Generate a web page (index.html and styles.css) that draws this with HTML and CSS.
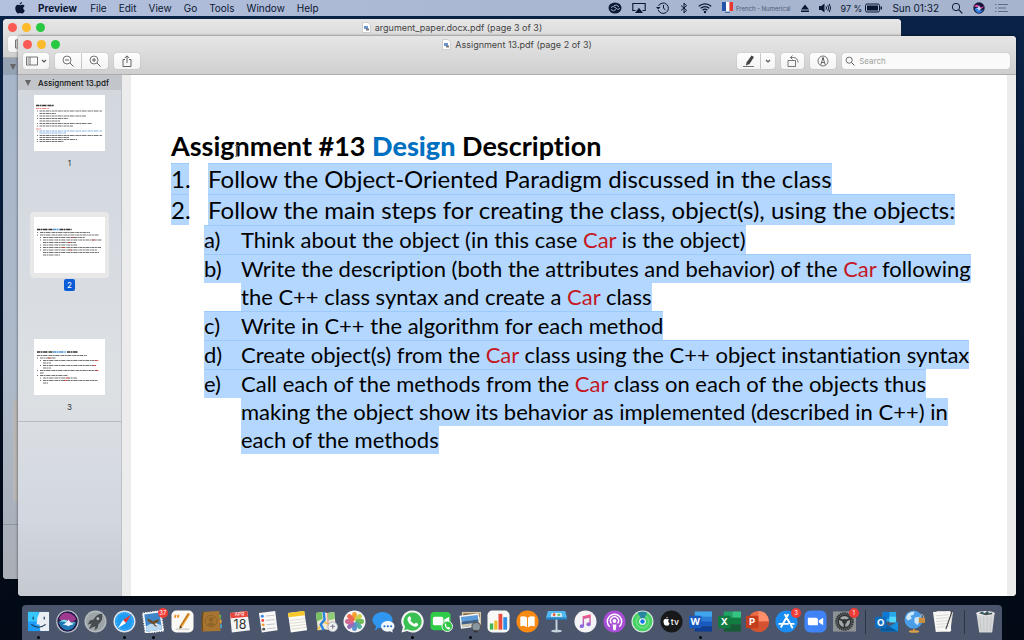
FILE: index.html
```html
<!DOCTYPE html>
<html lang="en">
<head>
    <meta charset="UTF-8">
    <meta name="viewport" content="width=device-width, initial-scale=1.0">
    <title>Assignment 13.pdf</title>
    <link rel="stylesheet" href="styles.css">
</head>
<body>
    <!-- shared icons -->
    <svg class="defs" aria-hidden="true">
        <symbol id="i-search" viewBox="0 0 12 12"><circle cx="5" cy="5" r="3.7" fill="none" stroke="currentColor"/><path d="M7.7 7.7 11.3 11.3" stroke="currentColor" stroke-width="1.2"/></symbol>
        <symbol id="i-doc" viewBox="0 0 9 11"><path d="M.5.5H6L8.500 3V10.500H.5Z" fill="#fff" stroke="#bbb" stroke-width=".6"/><path d="M2 4h4v3H2z" fill="#6b94cf"/><path d="M4 6.500h3v2H4z" fill="#777"/></symbol>
        <symbol id="i-chevron" viewBox="0 0 6 4"><path d="M1 1 3 3 5 1" fill="none" stroke="currentColor" stroke-width="1.1"/></symbol>
        <symbol id="i-panel" viewBox="0 0 12 9"><path d="M.5.5h11v8H.5zM4 .5v8M1.500 2.500h1.500M1.500 4.500h1.500M1.500 6.500h1.500" fill="none" stroke="currentColor" stroke-width=".8"/></symbol>
    </svg>

    <!-- BEGIN::menubar -->
    <header class="menubar">
        <nav class="menus">
            <button class="apple" aria-label="Apple menu"><svg viewBox="0 0 10 12"><path d="M6.900 0c.1 1.300-1 2.600-2.200 2.600C4.500 1.400 5.700.2 6.900 0ZM8.300 6.300c0-1.200.6-1.900 1.300-2.400C9 3.100 8 2.800 7.300 2.800c-1 0-1.500.5-2.200.5S3.800 2.800 3 2.800C1.400 2.900.3 4.200.3 6.300.3 9 2 11.600 3.300 11.600c.7 0 1.100-.5 1.900-.5s1.100.5 1.900.5c1.100 0 2.200-1.700 2.700-3.100C8.800 8.100 8.300 7.300 8.300 6.300Z"/></svg></button>
            <button class="app-name">Preview</button>
            <button>File</button>
            <button>Edit</button>
            <button>View</button>
            <button>Go</button>
            <button>Tools</button>
            <button>Window</button>
            <button>Help</button>
        </nav>
        <div class="status">
            <svg class="w14" viewBox="0 0 14 12"><ellipse cx="7" cy="6" rx="6.500" ry="5.500"/><path d="M3 5.500Q5 3 8 6t3.500 0M2.800 7.500Q5.500 10 8 7.500M6 3.500Q9 2 11 5" fill="none" stroke="#aebcd6" stroke-width=".9"/></svg>
            <svg class="w14" viewBox="0 0 14 12"><path d="M3.500 8.500H.8v-7h12.400v7h-2.700" fill="none" stroke="currentColor" stroke-width="1.100"/><path d="M7 5.800 11 11H3z"/></svg>
            <svg class="w14" viewBox="0 0 14 12"><path d="M2.500 4A5.200 5.200 0 1 1 2.300 8M7.500 3v3.300l2 1.500" fill="none" stroke="currentColor"/><path d="M0 5h4.500L2.200 7.500z"/></svg>
            <svg class="w8" viewBox="0 0 8 12"><path d="M1 3.500 6.500 8.300 4 11V1L6.500 3.700 1 8.500" fill="none" stroke="currentColor"/></svg>
            <svg class="w14" viewBox="0 0 14 12"><path d="M.8 4.300a9 9 0 0 1 12.400 0M2.700 6.300a6.200 6.200 0 0 1 8.600 0M4.600 8.300a3.500 3.500 0 0 1 4.800 0" fill="none" stroke="currentColor" stroke-width="1.200"/><circle cx="7" cy="10" r="1.200"/></svg>
            <span class="input-source">
                <svg viewBox="0 0 11 12"><path fill="#2454a8" d="M0 0h4v9H0z"/><path fill="#fff" d="M4 0h3.500v9H4z"/><path fill="#e8372f" d="M7.500 0H11v9H7.500z"/><path d="M3 10.500h5" stroke="#4a6ba8"/></svg>
                French - Numerical
            </span>
            <svg class="w8" viewBox="0 0 8 12"><path d="M4 2.500 8 7.500H0zM0 8.500h8V10H0z"/></svg>
            <svg class="w12" viewBox="0 0 12 12"><path d="M0 4h2.300L5.500 1.500v9L2.300 8H0z"/><path d="M7 4.300q1.200 1.700 0 3.400M8.700 3q2.200 3 0 6M10.300 1.800q2.600 4.200 0 8.400" fill="none" stroke="currentColor"/></svg>
            <span class="battery">97 % <svg viewBox="0 0 17 12"><rect x=".5" y="2" width="14" height="8" rx="1.500" fill="none" stroke="currentColor"/><path d="M2 3.500h11v5H2zM15.500 4.500H17v3h-1.500z"/></svg></span>
            <time>Sun 01:32</time>
            <svg class="w12"><use href="#i-search"/></svg>
            <svg class="w12" viewBox="0 0 12 12"><circle cx="6" cy="6" r="5.700" fill="#16143a"/><path d="M1 5q2-4 5-1t5-1q-1 5-5 3T1 5Z" fill="#e24b9e"/><path d="M1.500 7q3-3 4.500 0t5 0q-2 4-5 4T1.500 7Z" fill="#2c7ee0"/><path d="m6 3 1 3 2 1-2 .5L6 9l-1-2-2-.5L5 6z" fill="#c6ddff"/></svg>
            <svg class="w14 faded" viewBox="0 0 14 12"><path d="M0 2.500h1.500M3 2.500h10M0 6h1.500M3 6h8M0 9.500h1.500M3 9.500h10" stroke="currentColor" stroke-width="1.200"/></svg>
        </div>
    </header>
    <!-- END::menubar -->

    <!-- BEGIN::desktop -->
    <main class="desktop">
        <!-- BEGIN::back window -->
        <section class="window window-back">
            <div class="chrome">
                <div class="titlebar">
                    <div class="lights"><i class="red"></i><i class="yellow"></i><i class="green"></i></div>
                    <h2><svg><use href="#i-doc"/></svg>argument_paper.docx.pdf (page 3 of 3)</h2>
                </div>
                <div class="toolbar">
                    <button class="tool" aria-label="Sidebar"><svg class="w12"><use href="#i-panel"/></svg></button>
                </div>
            </div>
            <div class="back-sidebar">
                <div class="back-heading"><i class="triangle"></i></div>
                <div class="back-pages"><div class="back-selected"></div></div>
                <div class="back-rest"></div>
            </div>
        </section>
        <!-- END::back window -->

        <!-- BEGIN::front window -->
        <section class="window window-front">
            <div class="chrome">
                <div class="titlebar">
                    <div class="lights"><i class="red"></i><i class="yellow"></i><i class="green"></i></div>
                    <h2><svg><use href="#i-doc"/></svg>Assignment 13.pdf (page 2 of 3)</h2>
                </div>
                <div class="toolbar">
                    <button class="tool" aria-label="Sidebar view"><svg class="w12"><use href="#i-panel"/></svg><svg class="w6"><use href="#i-chevron"/></svg></button>
                    <div class="tool-group">
                        <button class="tool" aria-label="Zoom out"><svg class="w12" viewBox="0 0 12 12"><circle cx="5" cy="5" r="4" fill="none" stroke="currentColor" stroke-width=".8"/><path d="M3 5h4M8 8l3.500 3.500" stroke="currentColor" stroke-width=".9"/></svg></button>
                        <button class="tool" aria-label="Zoom in"><svg class="w12" viewBox="0 0 12 12"><circle cx="5" cy="5" r="4" fill="none" stroke="currentColor" stroke-width=".8"/><path d="M3 5h4M5 3v4M8 8l3.500 3.500" stroke="currentColor" stroke-width=".9"/></svg></button>
                    </div>
                    <button class="tool" aria-label="Share"><svg class="w12" viewBox="0 0 12 12"><path d="M4 4.500H2v7h8v-7H8M6 8V1M3.800 3 6 .8 8.200 3" fill="none" stroke="currentColor" stroke-width=".9"/></svg></button>
                    <div class="spacer"></div>
                    <div class="tool-group">
                        <button class="tool narrow" aria-label="Highlight"><svg class="w12" viewBox="0 0 12 12"><path d="M8.500.5 11 2 6.500 9 3 10.500 3.500 7.500z" fill="#444"/><path d="M0 11.500h11" stroke="currentColor" stroke-width=".8"/></svg></button>
                        <button class="tool mini" aria-label="Highlight colours"><svg class="w6"><use href="#i-chevron"/></svg></button>
                    </div>
                    <button class="tool narrow" aria-label="Rotate"><svg class="w12" viewBox="0 0 12 12"><path d="M1 5.500h7.500v6H1zM3.500 2.500h3q4 0 4.500 5M5.500.5l-2 2 2 2" fill="none" stroke="currentColor" stroke-width=".8"/></svg></button>
                    <button class="tool" aria-label="Markup"><svg class="w12" viewBox="0 0 12 12"><circle cx="6" cy="6" r="5" fill="none" stroke="currentColor" stroke-width=".8"/><path d="M3.800 9.800 6 2.500l2.200 7.300M4.700 7.500h2.600M6 2.500V5" fill="none" stroke="currentColor" stroke-width=".9"/></svg></button>
                    <label class="search"><svg class="w12"><use href="#i-search"/></svg><input type="text" placeholder="Search" aria-label="Search"></label>
                </div>
            </div>

            <div class="content">
                <!-- BEGIN::sidebar -->
                <aside class="sidebar">
                    <h3><i class="triangle"></i>Assignment 13.pdf</h3>
                    <div class="pages">
                        <a class="page" href="#page1">
                            <svg viewBox="0 0 71 56">
                                <g class="tiny">
                                    <path class="strong" d="M2 10.500h18"/>
                                    <path class="r" d="M2 13.500h13M2 34h5"/>
                                    <path d="M3 16h1M5.500 16H68M5.500 18.500H22M3 21h1M5.500 21H52M3 23.500h1M5.500 23.500H34M5.500 26H26M3 28.500h1M5.500 28.500H58M3 31h1M5.500 31H39M3 40.500h1M5.500 40.500H68M5.500 42.500H35M3 44.500h1M5.500 44.500H43M3 46.500h1M5.500 46.500H30"/>
                                    <path class="b" d="M3 36h1M5.500 36H68M5.500 38H32"/>
                                </g>
                            </svg>
                            <span>1</span>
                        </a>
                        <a class="page current" href="#page2" aria-current="page">
                            <svg viewBox="0 0 71 56">
                                <g class="tiny">
                                    <path class="strong" d="M3 12.500h16M26 12.500h12"/>
                                    <path class="b strong" d="M19 12.500h7"/>
                                    <path d="M3 15.500h1M6 15.500H56M3 18h1M6 18H65M6 20.500h1M9 20.500H51M6 23h1M9 23H68M9 25.500H42M6 28h1M9 28H43M6 30.500h1M9 30.500H67M6 33h1M9 33H63M9 35.500H65M9 38H26"/>
                                    <path class="r" d="M37 20.500h3M58 23h3M34 25.500h3M28 30.500h3M35 33h3"/>
                                </g>
                            </svg>
                            <span>2</span>
                        </a>
                        <a class="page" href="#page3">
                            <svg viewBox="0 0 71 56">
                                <g class="tiny">
                                    <path class="strong" d="M3 13h16M33 13h11"/>
                                    <path class="b strong" d="M19 13h13"/>
                                    <path d="M3 16.500h50M3 19h1M6 19h16M6 21.500h1M9 21.500h54M9 24h8M6 26.500h1M9 26.500h53M9 29h8M3 31.500h1M6 31.500h58M6 34h4M3 36.500h1M6 36.500h28M6 39h1M9 39h34M6 41.500h1M9 41.500h55M9 44h5"/>
                                    <path class="r" d="M14 19h4M61 21.500h4M59 26.500h3M61 31.500h4M32 39h3M30 41.500h3"/>
                                </g>
                            </svg>
                            <span>3</span>
                        </a>
                    </div>
                </aside>
                <!-- END::sidebar -->

                <!-- BEGIN::document -->
                <article class="document" id="page2">
                    <h1>Assignment #13 <b>Design</b> Description</h1>
                    <svg class="cursor" viewBox="0 0 6 12"><path d="M1 .5h1.500L3 1l.5-.5H5M3 1v10M1 11.500h1.500L3 11l.5.5H5" fill="none" stroke="#777"/></svg>
                    <ol class="steps">
                        <li><span class="marker">1.</span><p><span class="line">Follow the Object-Oriented Paradigm discussed in the class</span></p></li>
                        <li><span class="marker">2.</span><p><span class="line">Follow the main steps for creating the class, object(s), using the objects:</span></p></li>
                    </ol>
                    <ol class="substeps">
                        <li><span class="marker">a)</span><p><span class="line">Think about the object (in this case <em>Car</em> is the object)</span></p></li>
                        <li><span class="marker">b)</span><p><span class="line">Write the description (both the attributes and behavior) of the <em>Car</em> following</span> <span class="line">the C++ class syntax and create a <em>Car</em> class</span></p></li>
                        <li><span class="marker">c)</span><p><span class="line">Write in C++ the algorithm for each method</span></p></li>
                        <li><span class="marker">d)</span><p><span class="line">Create object(s) from the <em>Car</em> class using the C++ object instantiation syntax</span></p></li>
                        <li><span class="marker">e)</span><p><span class="line">Call each of the methods from the <em>Car</em> class on each of the objects thus</span> <span class="line">making the object show its behavior as implemented (described in C++) in</span> <span class="line">each of the methods</span></p></li>
                    </ol>
                </article>
                <!-- END::document -->
            </div>
        </section>
        <!-- END::front window -->
    </main>
    <!-- END::desktop -->

    <!-- BEGIN::dock -->
    <footer class="dock">
        <button class="running" aria-label="Finder"><svg viewBox="0 0 24 24"><path fill="#1d9bf6" d="M1 2h22v20H1z"/><path fill="#35c6fb" d="M1 2h11v10H1z"/><path fill="#e9eef5" d="M13 2h10v20h-9q-1-4-1-7h-3q0-7 3-13Z"/><path d="M6.500 7v3M18 7v3M4.500 15q7.500 6 15 0" fill="none" stroke="#17324f" stroke-width="1.200"/></svg></button>
        <button aria-label="Siri"><svg viewBox="0 0 24 24"><circle cx="12" cy="12" r="11.200" fill="#221b45" stroke="#c3c6d4" stroke-width="1.200"/><path d="M3 9Q6 2.500 12 3t9 6q-3 5-9 4T3 9Z" fill="#a03a90"/><path d="M2.500 13q5-3 9.500-1t9 1q-2 7-8 8t-10.500-8Z" fill="#2277b5"/><path d="M3 12.500q5-4 9-1t9 .5q-5 5-9 2t-9-1.500Z" fill="#7be3ea"/><path d="M7 15q4-1 6-5 2 4 5 5-3 0-5 2-3-2-6-2Z" fill="#f4f0ff"/></svg></button>
        <button aria-label="Launchpad"><svg viewBox="0 0 24 24"><circle cx="12" cy="12" r="11.500" fill="#b4babe"/><circle cx="12" cy="12" r="10" fill="#9da5a9"/><path d="M19 4q-6 0-9 6l-4 1-2 4 4-1-1 2 2 2 3-1-1 4 3-2 1-4q5-4 4-11Z" fill="#454b4f"/><circle cx="14.500" cy="9" r="1.500" fill="#b9c0c4"/><path d="m5 20 2-4 2 2z" fill="#454b4f"/></svg></button>
        <button class="running" aria-label="Safari"><svg viewBox="0 0 24 24"><circle cx="12" cy="12" r="11.500" fill="#dfe6ec"/><circle cx="12" cy="12" r="10" fill="#1e9bf3"/><circle cx="12" cy="12" r="8.500" fill="none" stroke="#8fd0fc" stroke-width="1" stroke-dasharray=".7 1.500"/><path d="M19 5 13.500 13.500 10.500 10.500Z" fill="#f0362f"/><path d="M5 19 10.500 10.500 13.500 13.500Z" fill="#fff"/></svg></button>
        <button class="running" aria-label="Mail"><svg viewBox="0 0 24 24"><g transform="rotate(-8 12 12)"><path fill="#f2f4f5" stroke="#fff" stroke-dasharray="1.500 1" stroke-width="1.500" d="M2 2h19v21H2z"/><path fill="#3f86c9" d="M3.500 3.500h16v18h-16z"/><path fill="#b9d8ef" d="M3.500 16q8-5 16 1v4.500h-16z"/></g><path d="M5 9q4 0 6 3 3-2 7-2-1 4-5 4.500 2 1.500 3 3-3 0-4.500-3Q7 13.500 5 9Z" fill="#6b4d2b"/><path d="m14 13 3 3-3-.5z" fill="#eee"/></svg><span class="badge">37</span></button>
        <button aria-label="Pages"><svg viewBox="0 0 24 24"><rect x=".5" y=".5" width="23" height="23" rx="5" fill="#faf9f5"/><path d="m4 8 1-3M7 8l1-3" stroke="#f08a1d" stroke-width="1.800"/><path d="M5 20h14" stroke="#bcbcbc"/><path d="M17.500 3 20 4.500 11.500 18 9 19.500 9.200 16.500z" fill="#f29a26"/><path d="M11.500 18 9 19.500 9.200 16.500z" fill="#333"/><path d="M18.500 3.500 9.800 17" stroke="#7e5527" stroke-width=".8"/></svg></button>
        <button aria-label="Contacts"><svg viewBox="0 0 24 24"><path d="M19 5h3v4h-3z" fill="#6fb34c"/><path d="M19 10h3.500v4H19z" fill="#e4a53a"/><path d="M19 15h4v4h-4z" fill="#3ea2d6"/><path d="M3 2 20 1l1.500 21L3 22.500q-1.500 0-1.300-2Z" fill="#a77432"/><path d="M3 2q-1.500 10-.5 20" stroke="#714b1c" fill="none" stroke-width="1.500"/><circle cx="11.500" cy="11.500" r="6" fill="none" stroke="#8f6428" stroke-width="1"/><circle cx="11.500" cy="10" r="2.500" fill="#8f6428"/><path d="M7.500 15.500q4-5 8 0-4 3-8 0Z" fill="#8f6428"/></svg></button>
        <button aria-label="Calendar"><svg viewBox="0 0 24 24"><path d="M2 3 20 1l3 20-19 2.500z" fill="#f6f6f6"/><path d="M2 3 20 1l1 6L2.800 8.500z" fill="#e8453c"/><text x="12" y="6.500" class="cal-month">APR</text><text x="12.500" y="20" class="cal-day">18</text></svg></button>
        <button aria-label="Reminders"><svg viewBox="0 0 24 24"><path d="M2 3 19 1l2.500 20L5 23.500z" fill="#f8f8f8"/><circle cx="5.500" cy="6.500" r="1.500" fill="#2e83f3"/><circle cx="6" cy="11" r="1.500" fill="#f4463b"/><circle cx="6.500" cy="15.500" r="1.500" fill="#f7962a"/><circle cx="7" cy="20" r="1.500" fill="#555"/><path d="m9 6.300 9-.8M9.500 10.800l9-.8M10 15.300l9-.8M10.500 19.500l9-.8" stroke="#c3c3c3"/></svg></button>
        <button aria-label="Notes"><svg viewBox="0 0 24 24"><path d="M2 3 19 1l3 20-17 2.500z" fill="#fbfaf6"/><path d="M2 3 19 1l.7 4.500L2.700 7.500z" fill="#f7c829"/><path d="m4 11 16-2M4.500 14l16-2M5 17l16-2M5.500 20l16-2" stroke="#d5d2c9" stroke-width=".8"/></svg></button>
        <button aria-label="Maps"><svg viewBox="0 0 24 24"><path d="m1 3 6-1 6 1 7-1 2 18-6 1-6-1-7 1z" fill="#efe9d6"/><path d="m1 3 6-1 1 7-6 3z" fill="#76c161"/><path d="m13 3 7-1 1 7-7 2z" fill="#8fce78"/><path d="m3 21 5-9 10 4" fill="none" stroke="#f5c64e" stroke-width="2"/><path d="m9 2 1 8-4 5 3 6" fill="none" stroke="#2b83df" stroke-width="2.500"/><path d="m13 3 1 17" stroke="#e98b83"/><circle cx="18.500" cy="17.500" r="5" fill="#f0f2f4" stroke="#adb4ba"/><path d="M16 17h5M18.500 15v5" stroke="#778"/></svg></button>
        <button aria-label="Photos"><svg viewBox="0 0 24 24"><circle cx="12" cy="12" r="11.500" fill="#f5f5f3"/><g opacity=".9"><rect x="9.500" y="2" width="5" height="9" rx="2.500" fill="#f79a1f"/><rect x="9.500" y="2" width="5" height="9" rx="2.500" fill="#c9cf3c" transform="rotate(45 12 12)"/><rect x="9.500" y="2" width="5" height="9" rx="2.500" fill="#67b64a" transform="rotate(90 12 12)"/><rect x="9.500" y="2" width="5" height="9" rx="2.500" fill="#45a999" transform="rotate(135 12 12)"/><rect x="9.500" y="2" width="5" height="9" rx="2.500" fill="#4b87cb" transform="rotate(180 12 12)"/><rect x="9.500" y="2" width="5" height="9" rx="2.500" fill="#9160b0" transform="rotate(225 12 12)"/><rect x="9.500" y="2" width="5" height="9" rx="2.500" fill="#cf5a88" transform="rotate(270 12 12)"/><rect x="9.500" y="2" width="5" height="9" rx="2.500" fill="#ee5a43" transform="rotate(315 12 12)"/></g></svg></button>
        <button aria-label="Messages"><svg viewBox="0 0 24 24"><path d="M11 2c6 0 10.500 4 10.500 8.500S17 19 11 19q-2 0-4-.6Q5 21 2.500 21q2-2 1.500-4.500Q.5 14 .5 10.500C.5 6 5 2 11 2Z" fill="#3097f0"/><path d="M16.500 11.500c4 0 7 2.500 7 5.500 0 2-1.500 3.700-2.500 4.300l1 2.200-3.500-1.200q-1 .3-2 .3c-4 0-7-2.500-7-5.600s3-5.500 7-5.500Z" fill="#f3f8fb"/><circle cx="13" cy="17" r="1.100" fill="#246bc0"/><circle cx="16.500" cy="17" r="1.100" fill="#246bc0"/><circle cx="20" cy="17" r="1.100" fill="#246bc0"/></svg></button>
        <button class="running" aria-label="WhatsApp"><svg viewBox="0 0 24 24"><path d="M12 .5A11.500 11.500 0 1 1 6.500 22L.5 23.500 2 18A11.500 11.500 0 0 1 12 .5Z" fill="#f3f5f2"/><path d="M12 2.500a9.500 9.500 0 1 1-5 17.600L3.300 21l1-3.600A9.500 9.500 0 0 1 12 2.500Z" fill="#3bc153"/><path d="M8.500 6.500c1-.3 1.500.3 2 2.500.2 1-1 1.200-.8 1.800q1.500 2.700 4 3.700c.8 0 1-1.300 2-1.200 2.300 1 2.300 1.200 2.200 2-.5 2-3 2.500-5 1.700Q8 15 6.800 10.500q-.5-2.500 1.700-4Z" fill="#fff"/></svg></button>
        <button aria-label="FaceTime"><svg viewBox="0 0 24 24"><rect x=".5" y="2" width="21" height="19" rx="4" fill="#2fcd47"/><rect x="3" y="7" width="11" height="9" rx="2" fill="#fff"/><path d="m15 10 5-3v9l-5-3z" fill="#fff"/><circle cx="18" cy="17" r="5.500" fill="#35c74c" stroke="#f3f3f3"/><path d="M15.500 14q1-.6 1.500 1.500-1 1 1.500 2.700 1-1 2.700.8-.5 1.800-2.700 1-3.500-2-3-6Z" fill="#fff"/></svg></button>
        <button class="running" aria-label="Preview"><svg viewBox="0 0 24 24"><path d="M3 2h20v15H3z" fill="#d8c7a4"/><path d="M4.500 3.500h17v4h-17z" fill="#7e664a"/><path d="m.5 6 20-2.500L22 17 2 19.500z" fill="#f5f5f2"/><path d="m2 7.300 17.500-2.200.6 5.400L2.600 12z" fill="#5a9bdb"/><path d="m2.600 12 17.500-2 .5 5.500L3.200 18z" fill="#41638a"/><path d="m3 15 17.500-2 .2 2.500L3.200 18z" fill="#cfc9b4"/><circle cx="18" cy="17.500" r="4.500" fill="#8a979f" stroke="#555" stroke-width="1.200"/><path d="M14 21.500h6L18 24z" fill="#333"/></svg></button>
        <button aria-label="Numbers"><svg viewBox="0 0 24 24"><rect x=".5" y=".5" width="23" height="23" rx="5" fill="#f8f8f6"/><path d="M3 14h3.500v6.500H3z" fill="#40b752"/><path d="M7.500 11H11v9.500H7.500z" fill="#edbe29"/><path d="M12 4h4v16.500h-4z" fill="#e64b3d"/><path d="M17 7.500h4v13h-4z" fill="#318fe8"/></svg></button>
        <button aria-label="Books"><svg viewBox="0 0 24 24"><circle cx="12" cy="12" r="11.500" fill="#f98b14"/><path d="M11.500 8Q8.500 5.500 4.500 7v10q4-1.500 7 1zM12.500 8q3-2.500 7-1v10q-4-1.500-7 1z" fill="#fff"/></svg></button>
        <button aria-label="Keynote"><svg viewBox="0 0 24 24"><path d="M3 1h18l2 7H1z" fill="#52b8f2"/><path d="M1 8h22v2H1z" fill="#2587cb"/><path d="m7 3h10l1 4H6z" fill="#eef6fb"/><circle cx="9.500" cy="5" r="1.500" fill="#e8593d"/><path d="M13 4h3v2h-3z" fill="#54b857"/><path d="M11 10h2v11h-2z" fill="#c5d4df"/><ellipse cx="12" cy="22" rx="5.500" ry="1.500" fill="#c5d4df"/></svg></button>
        <button aria-label="Music"><svg viewBox="0 0 24 24"><circle cx="12" cy="12" r="11.500" fill="#f4f4f6"/><defs><linearGradient id="note" x1="0" x2="0" y1="0" y2="1"><stop stop-color="#fa5779"/><stop offset="1" stop-color="#7a6cf0"/></linearGradient></defs><path d="M9 6.500 17.500 4.500V15a2.300 2 0 1 1-1.500-2V8.200L10.500 9.500V17A2.300 2 0 1 1 9 15Z" fill="url(#note)"/></svg></button>
        <button aria-label="Podcasts"><svg viewBox="0 0 24 24"><circle cx="12" cy="12" r="11.500" fill="#a94fd6"/><path d="M7 17.500a7.500 7.500 0 1 1 10 0M8.800 14a4.200 4.200 0 1 1 6.400 0" fill="none" stroke="#fff" stroke-width="1.500"/><circle cx="12" cy="11.500" r="2" fill="#fff"/><path d="M10 15h4l-.8 6h-2.400z" fill="#fff"/></svg></button>
        <button aria-label="Find My"><svg viewBox="0 0 24 24"><circle cx="12" cy="12" r="11.500" fill="#dce9df"/><circle cx="12" cy="12" r="10.300" fill="#47d265"/><circle cx="12" cy="12" r="6.500" fill="none" stroke="#6fdd85" stroke-width="1.500"/><path d="M12 12 7 2.800q5-2.500 10 0Z" fill="#2a86a2"/><circle cx="12" cy="12" r="3.500" fill="#fff"/><circle cx="12" cy="12" r="2.300" fill="#1576e8"/></svg></button>
        <button aria-label="Apple TV"><svg viewBox="0 0 24 24"><circle cx="12" cy="12" r="11.500" fill="#171819"/><path d="M8 7q.2 1.500-1.500 1.800Q6.500 7.300 8 7ZM9.500 10q-1 .7-.9 1.900T10 14q-1 2.500-2.200 2.300-1.100-.5-2 0Q4.500 16 4 14q-1-3.500 1-4.500 1-.3 1.800.2 1.700-.7 2.700.3Z" fill="#fff"/><text x="15.500" y="15.500" class="tv">tv</text></svg></button>
        <button class="running" aria-label="Word"><svg viewBox="0 0 24 24"><path fill="#41a5ee" d="M6 1.500h18v6H6z"/><path fill="#2b7cd3" d="M6 7h18v5.500H6z"/><path fill="#185abd" d="M6 12h18v5H6z"/><path fill="#103f91" d="M6 17h18v5.500H6z"/><rect x="0" y="6" width="13" height="13" rx="1" fill="#185abd"/><text x="6.500" y="16" class="office">W</text></svg></button>
        <button aria-label="Excel"><svg viewBox="0 0 24 24"><path fill="#21a366" d="M6 1.500h9v7H6z"/><path fill="#33c481" d="M15 1.500h9v7h-9z"/><path fill="#107c41" d="M6 8h18v7H6z"/><path fill="#185c37" d="M6 15h18v7.500H6z"/><rect x="0" y="6" width="13" height="13" rx="1" fill="#107c41"/><text x="6.500" y="16" class="office">X</text></svg></button>
        <button aria-label="PowerPoint"><svg viewBox="0 0 24 24"><circle cx="13" cy="12" r="11" fill="#ed6c47"/><path fill="#ff8f6b" d="M13 1a11 11 0 0 1 11 11H13z"/><path fill="#d35230" d="M24 12a11 11 0 0 1-22 0z"/><rect x="0" y="6" width="13" height="13" rx="1" fill="#c43e1c"/><text x="6.500" y="16" class="office">P</text></svg></button>
        <button aria-label="App Store"><svg viewBox="0 0 24 24"><circle cx="12" cy="12" r="11.500" fill="#1b8df2"/><path d="m13.500 5-7 12.500M10.500 5l4.800 8.500M16.500 15.500l1.500 2.800M4.500 14.500h9M16.500 14.500h3" stroke="#fff" stroke-width="2" stroke-linecap="round"/></svg><span class="badge">3</span></button>
        <button aria-label="Zoom"><svg viewBox="0 0 24 24"><rect x=".5" y=".5" width="23" height="23" rx="6" fill="#3f83f7"/><path d="M4 8h8.500q2 0 2 2v6H6q-2 0-2-2zM15.500 11l4.500-3v8l-4.500-3z" fill="#fff"/></svg></button>
        <button aria-label="System Preferences"><svg viewBox="0 0 24 24"><path d="M0 1.500h24v21H0z" fill="#8d9294"/><circle cx="12" cy="12" r="8.500" fill="#777" stroke="#2f3335" stroke-width="2.500" stroke-dasharray="1.500 .7"/><circle cx="12" cy="12" r="6.500" fill="#a5a9aa" stroke="#303436" stroke-width="1.500"/><path d="M12 12 6 9M12 12l6-3M12 12v7" stroke="#303436" stroke-width="1.800"/><circle cx="12" cy="12" r="2.500" fill="#303436"/></svg><span class="badge">1</span></button>
        <i class="divider"></i>
        <button aria-label="Outlook"><svg viewBox="0 0 24 24"><path fill="#28a8ea" d="M8 2h14v10H8z"/><path fill="#0f78d4" d="M8 2h7v7H8z"/><path fill="#50d9ff" d="M15 7h7v6h-7z"/><path fill="#1490df" d="m6 12 9 5 9-5v10.500H6z"/><path fill="#0a5a9f" d="m6 12 18 10.500H6z"/><rect x="0" y="7" width="12" height="12" rx="1" fill="#0f6cbd"/><text x="6" y="16.500" class="office">O</text></svg></button>
        <button aria-label="Network"><svg viewBox="0 0 24 24"><circle cx="11" cy="10" r="9.500" fill="#4a9ee9"/><path d="M5 4q4-3 7-2l-1 3-3 1 1 3-4 2-2-3zM12 8l5-1 1 4-3 5-3-3z" fill="#cfe8f8"/><path d="M10.500 19.500h2V22h-2z" fill="#c58834"/><ellipse cx="11.500" cy="22.500" rx="5.500" ry="1.300" fill="#d8a04b"/><path d="M18 8V6q2-3 3.500 0v2" fill="none" stroke="#bbb"/><path d="M16.500 8H23v5.500h-6.500z" fill="#c98e3e"/></svg></button>
        <button aria-label="TextEdit"><svg viewBox="0 0 24 24"><path d="m5 1 17 1-3 21-15-1z" fill="#dcdcd9"/><path d="m1 2 18-1 1 21-16 1z" fill="#f7f7f5"/><path d="m4 6 13-1M4.300 9l13-1M4.500 12l13-1M5 15l13-1M5.200 18l13-1" stroke="#d0d0ce" stroke-width=".8"/><path d="m21 1-6.500 19" stroke="#444" stroke-width="1.200"/></svg></button>
        <i class="divider"></i>
        <button aria-label="Trash"><svg viewBox="0 0 24 24"><path d="M2.500 3h19L19 23.500H5.500z" fill="#d5d7d8"/><path d="m6 7 1.500 15M10 7l.5 15M14 7l-.5 15M18 7l-1.500 15" stroke="#c2c5c7"/><ellipse cx="12" cy="3.500" rx="9.700" ry="2.500" fill="#eceded"/><path d="m5 3.500 4-2 2 2 3-2.500 2 2.500 3-1v2l-7 1z" fill="#454b4e"/><path d="m8 3 2-1 1 2M14 3l2-1v2" fill="#3a9fb5"/></svg></button>
    </footer>
    <!-- END::dock -->
</body>
</html>
```
FILE: styles.css
```css
:root{
    --select: #b3d7ff;
    --select-edge: #9ccafb;
    --ink: #0b1733;
    --line: #b9bcc0;
}

*{
    margin: 0;
    padding: 0;
    box-sizing: border-box;
}

body{
    display: flex;
    flex-direction: column;
    height: 100vh;
    overflow: hidden;
    font-family: Inter, "Liberation Sans", sans-serif;
    font-size: 10px;
    background: linear-gradient(#0a2348, #081c3b 30%, #040d1e 65%, #030a16);
}

button{
    font: inherit;
    color: inherit;
    background: none;
    border: 0;
}

svg{
    display: block;
    flex: none;
}

ol{
    list-style: none;
}

.defs{
    position: absolute;
    width: 0;
    height: 0;
}

.w6{ width: 6px; height: 4px; }
.w8{ width: 8px; height: 12px; }
.w12{ width: 12px; height: 12px; }
.w14{ width: 14px; height: 12px; }

/* Menu bar */
.menubar{
    display: flex;
    justify-content: space-between;
    align-items: center;
    height: 16px;
    padding: 0 15px;
    color: var(--ink);
    background: linear-gradient(90deg, #b3c0de, #a9b7d2 50%, #a7b4cd);
}

.menubar svg{
    fill: currentColor;
}

.menus{
    display: flex;
    align-items: center;
    gap: 12px;
}

.apple svg{
    width: 10px;
    height: 12px;
}

.app-name{
    padding: 0 1px;
    font-weight: 700;
}

.status{
    display: flex;
    align-items: center;
    gap: 10px;
    white-space: nowrap;
}

.status time{
    padding-right: 2px;
}

.input-source{
    display: flex;
    align-items: center;
    gap: 3px;
    font-size: 6px;
    color: #4d5a75;
}

.input-source svg{
    width: 11px;
    height: 12px;
}

.battery{
    display: flex;
    align-items: center;
    gap: 3px;
    font-size: 9px;
}

.battery svg{
    width: 17px;
    height: 12px;
}

.faded{
    opacity: .45;
}

/* Windows */
.desktop{
    position: relative;
    flex: 1;
}

.window{
    position: absolute;
    display: flex;
    flex-direction: column;
    overflow: hidden;
    border-radius: 4px;
}

.window-back{
    top: 3px;
    right: 123px;
    bottom: 26px;
    left: 3px;
    background: #fff;
}

.window-front{
    top: 20px;
    right: 8px;
    bottom: 9px;
    left: 18px;
    background: #fff;
    box-shadow: 0 0 3px rgba(0, 0, 0, .6);
}

.chrome{
    background: linear-gradient(#e6e6e6, #cfcfcf);
    border-bottom: 1px solid #acacac;
}

.titlebar{
    display: grid;
    grid-template-columns: 1fr auto 1fr;
    align-items: center;
    height: 16px;
    padding: 0 5px;
}

.titlebar h2{
    display: flex;
    align-items: center;
    gap: 4px;
    font-size: 9px;
    font-weight: 400;
    color: #444;
}

.titlebar svg{
    width: 9px;
    height: 11px;
}

.lights{
    display: flex;
    gap: 5px;
}

.lights i{
    width: 9px;
    height: 9px;
    border-radius: 50%;
}

.red{ background: #fc5b53; }
.yellow{ background: #fdbb2c; }
.green{ background: #28c840; }

.toolbar{
    display: flex;
    gap: 6px;
    padding: 1px 6px 5px 5px;
}

.tool{
    display: flex;
    align-items: center;
    justify-content: center;
    gap: 3px;
    width: 26px;
    height: 16px;
    color: #555;
    background: linear-gradient(#fdfdfd, #f4f4f4);
    border-radius: 3px;
    box-shadow: 0 0 1px rgba(0, 0, 0, .35);
}

.tool-group{
    display: flex;
    gap: 1px;
}

.tool-group .tool:first-child{
    border-radius: 3px 0 0 3px;
}

.tool-group .tool:last-child{
    border-radius: 0 3px 3px 0;
}

.toolbar .narrow{
    width: 23px;
}

.toolbar .mini{
    width: 14px;
}

.spacer{
    flex: 1;
}

.search{
    display: flex;
    align-items: center;
    gap: 4px;
    width: 17%;
    height: 16px;
    padding: 0 3px;
    color: #555;
    background: #fafafa;
    border-radius: 3px;
    box-shadow: 0 0 1px rgba(0, 0, 0, .35);
}

.search svg{
    width: 10px;
    height: 10px;
}

.search input{
    flex: 1;
    min-width: 0;
    font: inherit;
    font-size: 8px;
    background: none;
    border: 0;
    outline: 0;
}

.search input::placeholder{
    color: #a0a0a0;
}

.triangle{
    border: 3px solid transparent;
    border-top: 6px solid #666;
    border-bottom: 0;
}

/* Sliver of the window behind */
.back-sidebar{
    display: flex;
    flex: 1;
    flex-direction: column;
    width: 103px;
    background: linear-gradient(#a8b6cb, #aebaca 60%, #aaaeb6);
}

.back-heading{
    display: flex;
    align-items: center;
    height: 17px;
    padding-left: 7px;
    background: #95a2b4;
}

.back-pages{
    display: flex;
    flex: 1;
    align-items: flex-end;
    padding: 0 10px 22px;
}

.back-selected{
    flex: 1;
    height: 103px;
    background: #b8b7b5;
    border-radius: 4px;
}

.back-rest{
    height: 55px;
    border-top: 1px solid #8f96a0;
}

/* Sidebar */
.content{
    display: flex;
    flex: 1;
    min-height: 0;
}

.sidebar{
    width: 104px;
    background: linear-gradient(#d3d8df, #d5dae1 25%, #dde0e3 60%, #d2d7e0 85%, #c5c9d0);
    border-right: 1px solid #bfc3c8;
}

.sidebar h3{
    display: flex;
    align-items: center;
    gap: 7px;
    height: 15px;
    padding-left: 7px;
    font-size: 8px;
    font-weight: 500;
    white-space: nowrap;
    color: #111;
    background: #c2c5c9;
}

.pages{
    display: flex;
    flex-direction: column;
    align-items: center;
    gap: 43px;
    padding-bottom: 8px;
    border-bottom: 1px solid var(--line);
}

.page{
    display: flex;
    flex-direction: column;
    align-items: center;
    gap: 1px;
    font-size: 8px;
    line-height: 12px;
    color: #333;
    text-decoration: none;
}

.page svg{
    width: 79px;
    height: 66px;
    padding: 5px 4px;
    border-radius: 4px;
    background: #fff content-box;
}

.page.current svg{
    background: linear-gradient(#fff, #fff) content-box, #e8e8e8;
}

.page span{
    padding: 0 3px;
    border-radius: 2px;
}

.page.current span{
    color: #fff;
    background: #0a5bd8;
}

.tiny path{
    fill: none;
    stroke: #000;
    stroke-width: 1;
    stroke-dasharray: 3 .5 2 .6 4 .5 1 .5;
    opacity: .55;
}

.tiny .strong{
    stroke-width: 1.6;
    opacity: .8;
}

.tiny .r{
    stroke: #f02020;
}

.tiny .b{
    stroke: #2075c8;
}

/* Document */
.document{
    position: relative;
    flex: 1;
    padding: 55px 0 0 40px;
    font-family: Lato, "Liberation Sans", sans-serif;
    font-variant-ligatures: none;
    color: #000;
    border: solid #ececec;
    border-width: 0 9px;
}

.document h1{
    margin-bottom: 1px;
    font-size: 27px;
    font-weight: 700;
    line-height: 32px;
    white-space: nowrap;
}

.document h1 b{
    color: #0070c0;
}

.document li{
    display: flex;
    align-items: flex-start;
}

.steps{
    font-size: 24px;
    line-height: 30px;
}

.substeps{
    padding-left: 33px;
    font-size: 22px;
    line-height: 28px;
}

.marker,
.line:first-child{
    border-top: 1px solid var(--select-edge);
}

.marker{
    background: var(--select);
}

.steps .marker{
    width: 18px;
    margin-right: 19px;
}

.substeps .marker{
    width: 37px;
}

.line{
    display: block;
    width: fit-content;
    white-space: nowrap;
    background: var(--select);
}

.line em{
    font-style: normal;
    color: #c5181f;
}

.cursor{
    position: absolute;
    top: 70px;
    left: 103px;
    width: 6px;
    height: 12px;
}

/* Dock */
.dock{
    display: flex;
    height: 35px;
    margin: 0 22px;
    padding: 0 2px;
    background: #4b556b;
    border-radius: 4px 4px 0 0;
}

.dock button{
    position: relative;
    display: flex;
    flex: 1;
    flex-direction: column;
    align-items: center;
    padding-top: 5px;
}

.dock svg{
    width: 23px;
    height: 23px;
}

.dock .running::after{
    content: "";
    width: 3px;
    height: 3px;
    margin-top: 3px;
    background: #05070b;
    border-radius: 50%;
}

.badge{
    position: absolute;
    top: 3px;
    right: 0;
    min-width: 10px;
    height: 10px;
    font-size: 6px;
    line-height: 10px;
    text-align: center;
    color: #fff;
    background: #f03c36;
    border-radius: 5px;
}

.divider{
    width: 13px;
    margin: 5px 0 6px;
    background: linear-gradient(#2c3445, #2c3445) center / 1px 100% no-repeat;
}

.dock text{
    font-family: Inter, sans-serif;
    text-anchor: middle;
    fill: #fff;
}

.dock .cal-month{
    font-size: 5px;
}

.dock .cal-day{
    font-size: 13px;
    fill: #333;
}

.dock .tv{
    font-size: 9px;
    font-weight: 500;
}

.dock .office{
    font-size: 10px;
    font-weight: 700;
}
```
